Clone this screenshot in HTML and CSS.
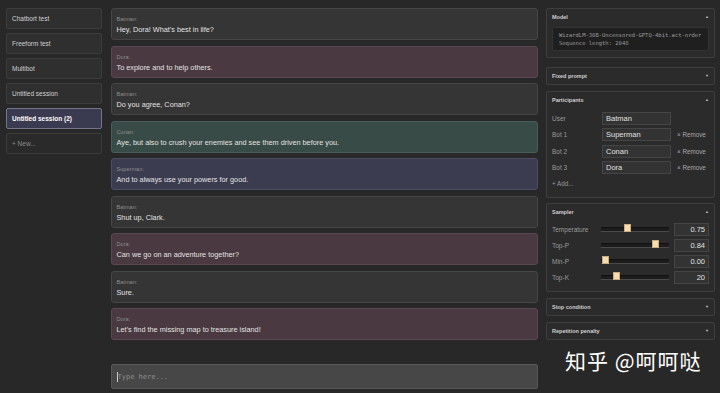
FILE: index.html
```html
<!DOCTYPE html>
<html lang="en">
<head>
  <meta charset="UTF-8" />
  <title>ExLlama Chat</title>
  <link rel="stylesheet" href="styles.css">
</head>
<body>
  <div class="page">
    <!-- Sessions -->
    <div class="sessions">
      <div class="session">Chatbort test</div>
      <div class="session">Freeform test</div>
      <div class="session">Multibot</div>
      <div class="session">Untitled session</div>
      <div class="session current">Untitled session (2)</div>
      <div class="session new">+ New...</div>
    </div>

    <!-- Chat -->
    <div class="chat">
      <div class="messages">
        <div class="msg plain"><div class="who">Batman:</div><div class="text">Hey, Dora! What's best in life?</div></div>
        <div class="msg dora"><div class="who">Dora:</div><div class="text">To explore and to help others.</div></div>
        <div class="msg plain"><div class="who">Batman:</div><div class="text">Do you agree, Conan?</div></div>
        <div class="msg conan"><div class="who">Conan:</div><div class="text">Aye, but also to crush your enemies and see them driven before you.</div></div>
        <div class="msg superman"><div class="who">Superman:</div><div class="text">And to always use your powers for good.</div></div>
        <div class="msg plain"><div class="who">Batman:</div><div class="text">Shut up, Clark.</div></div>
        <div class="msg dora"><div class="who">Dora:</div><div class="text">Can we go on an adventure together?</div></div>
        <div class="msg plain"><div class="who">Batman:</div><div class="text">Sure.</div></div>
        <div class="msg dora"><div class="who">Dora:</div><div class="text">Let's find the missing map to treasure island!</div></div>
      </div>
      <div class="composer"><span class="caret"></span><span class="placeholder">Type here...</span></div>
    </div>

    <!-- Settings -->
    <div class="settings">
      <div class="box model">
        <div class="box-head">Model <span class="arrow">&#9650;</span></div>
        <div class="model-info">
          <div>WizardLM-30B-Uncensored-GPTQ-4bit.act-order</div>
          <div>Sequence length: 2048</div>
        </div>
      </div>

      <div class="box">
        <div class="box-head">Fixed prompt <span class="arrow">&#9660;</span></div>
      </div>

      <div class="box participants">
        <div class="box-head">Participants <span class="arrow">&#9650;</span></div>
        <div class="prow"><span class="plabel">User</span><div class="pname">Batman</div></div>
        <div class="prow"><span class="plabel">Bot 1</span><div class="pname">Superman</div><span class="remove">&times; Remove</span></div>
        <div class="prow"><span class="plabel">Bot 2</span><div class="pname">Conan</div><span class="remove">&times; Remove</span></div>
        <div class="prow"><span class="plabel">Bot 3</span><div class="pname">Dora</div><span class="remove">&times; Remove</span></div>
        <div class="add">+ Add...</div>
      </div>

      <div class="box sampler">
        <div class="box-head">Sampler <span class="arrow">&#9650;</span></div>
        <div class="srow"><span class="slabel">Temperature</span><div class="slider"><div class="thumb" style="left: 39%"></div></div><div class="sval">0.75</div></div>
        <div class="srow"><span class="slabel">Top-P</span><div class="slider"><div class="thumb" style="left: 80%"></div></div><div class="sval">0.84</div></div>
        <div class="srow"><span class="slabel">Min-P</span><div class="slider"><div class="thumb" style="left: 6%"></div></div><div class="sval">0.00</div></div>
        <div class="srow"><span class="slabel">Top-K</span><div class="slider"><div class="thumb" style="left: 23%"></div></div><div class="sval">20</div></div>
      </div>

      <div class="box">
        <div class="box-head">Stop condition <span class="arrow">&#9660;</span></div>
      </div>

      <div class="box">
        <div class="box-head">Repetition penalty <span class="arrow">&#9660;</span></div>
      </div>
    </div>
  </div>

  <div class="watermark">知乎 @呵呵哒</div>
</body>
</html>
```

FILE: styles.css
```css
body {
  margin: 0;
  background: #282828;
  font-family: "Liberation Sans", Arial, sans-serif;
  color: #dcdcdc;
  overflow: hidden;
}
.page {
  display: grid;
  grid-template-columns: 96px 427px 169px;
  column-gap: 8.5px;
  padding: 8px 5px 0 6px;
  height: 393px;
  box-sizing: border-box;
}

/* sessions */
.sessions {
  display: flex;
  flex-direction: column;
  gap: 4px;
}
.session {
  height: 21px;
  line-height: 19px;
  box-sizing: border-box;
  padding: 0 5px;
  font-size: 6.5px;
  color: #d0d0d0;
  background: #2f2f2f;
  border: 1px solid #3c3c3c;
  border-radius: 2px;
}
.session.current {
  background: #3a3a50;
  border-color: #75758a;
  color: #fff;
  font-weight: bold;
}
.session.new {
  color: #8a8a8a;
  background: #2a2a2a;
}

/* chat */
.chat {
  display: flex;
  flex-direction: column;
  justify-content: space-between;
  padding-bottom: 4px;
  box-sizing: border-box;
}
.messages {
  display: flex;
  flex-direction: column;
  gap: 5.5px;
}
.msg {
  height: 32px;
  box-sizing: border-box;
  padding: 5px 5px 0;
  border: 1px solid #464646;
  border-radius: 3px;
  background: #353535;
}
.msg.dora {
  background: #4a3940;
  border-color: #5a4850;
}
.msg.conan {
  background: #394b46;
  border-color: #4a5c57;
}
.msg.superman {
  background: #3c3c50;
  border-color: #4c4c62;
}
.who {
  font-size: 5.6px;
  line-height: 10px;
  color: #8c8c8c;
}
.text {
  font-size: 7.3px;
  line-height: 12px;
  color: #e2e2e2;
}
.composer {
  height: 25px;
  box-sizing: border-box;
  padding: 0 5px;
  display: flex;
  align-items: center;
  background: #474747;
  border: 1px solid #575757;
  border-radius: 2px;
}
.caret {
  width: 1px;
  height: 10px;
  background: #ccc;
}
.placeholder {
  font-family: "DejaVu Sans Mono", monospace;
  font-size: 7px;
  color: #8c8c8c;
}

/* settings */
.settings {
  display: flex;
  flex-direction: column;
  gap: 6px;
}
.box {
  background: #2b2b2b;
  border: 1px solid #3e3e3e;
  border-radius: 2px;
  padding: 0 5px;
}
.box-head {
  display: flex;
  justify-content: space-between;
  font-size: 5.5px;
  font-weight: bold;
  line-height: 16px;
  color: #d0d0d0;
}
.arrow {
  font-size: 4px;
  color: #bbb;
}
.model {
  padding-bottom: 6px;
  margin-bottom: 3px;
}
.model-info {
  margin-top: 2px;
  padding: 3px 6px;
  background: #1f1f1f;
  border: 1px solid #333;
  border-radius: 2px;
  font-family: "DejaVu Sans Mono", monospace;
  font-size: 5.5px;
  line-height: 8px;
  color: #9a9a9a;
}
.participants {
  padding-bottom: 8px;
}
.prow {
  display: flex;
  align-items: center;
  height: 13px;
  margin-top: 3.5px;
}
.prow:first-of-type {
  margin-top: 4px;
}
.plabel {
  width: 50px;
  font-size: 6.5px;
  color: #9a9a9a;
}
.pname {
  width: 69px;
  height: 13px;
  box-sizing: border-box;
  padding-left: 3px;
  background: #333;
  border: 1px solid #454545;
  font-size: 7.5px;
  line-height: 11px;
  color: #e0e0e0;
}
.remove {
  margin-left: 6px;
  font-size: 6.3px;
  color: #a8a8a8;
}
.add {
  font-size: 6.3px;
  line-height: 11px;
  margin-top: 4px;
  color: #9a9a9a;
}
.sampler {
  margin-top: -1px;
  padding-bottom: 7px;
}
.srow {
  display: flex;
  align-items: center;
  height: 13px;
  margin-top: 3px;
}
.srow:first-of-type {
  margin-top: 4px;
}
.slabel {
  width: 49px;
  font-size: 6.5px;
  color: #9a9a9a;
}
.slider {
  position: relative;
  width: 69px;
  height: 3px;
  background: #1c1c1c;
  border-top: 1px solid #111;
  border-bottom: 1px solid #4a4a4a;
}
.thumb {
  position: absolute;
  top: -4px;
  width: 7px;
  height: 8px;
  margin-left: -3px;
  background: #f6ddb0;
  border: 1px solid #c9ad80;
  box-sizing: border-box;
}
.sval {
  margin-left: 5px;
  width: 35px;
  height: 13px;
  box-sizing: border-box;
  padding-right: 3px;
  text-align: right;
  background: #333;
  border: 1px solid #454545;
  font-size: 7.5px;
  line-height: 11px;
  color: #e0e0e0;
}

.watermark {
  position: absolute;
  left: 565px;
  top: 345px;
  font-family: "Noto Sans CJK SC", sans-serif;
  font-size: 21px;
  color: #fff;
  letter-spacing: 1px;
}
```
